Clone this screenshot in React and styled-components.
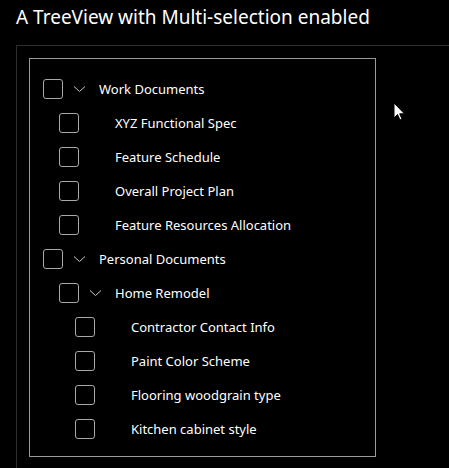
import React from 'react'
import styled, { createGlobalStyle } from 'styled-components'

const Global = createGlobalStyle`
  html, body {
    margin: 0;
    padding: 0;
    background: #000;
    overflow: hidden;
  }
  body {
    font-family: "Segoe UI", "Noto Sans", "Open Sans", sans-serif;
    color: #fff;
  }
`

const Page = styled.div`
  position: relative;
  width: 449px;
  height: 468px;
  background: #000;
  overflow: hidden;
`

const Title = styled.h1`
  margin: 0;
  padding: 3px 0 0 16px;
  height: 45px;
  box-sizing: border-box;
  font-size: 19px;
  font-weight: 400;
  line-height: 28px;
  color: #fff;
  white-space: nowrap;
`

const Panel = styled.div`
  margin-left: 16px;
  border-top: 1px solid #2e2e2e;
  border-left: 1px solid #2e2e2e;
  padding: 12px 0 0 12px;
  height: 500px;
`

const TreeBox = styled.div`
  width: 347px;
  box-sizing: border-box;
  border: 1px solid #9a9a9a;
  padding: 13px 0 10px;
`

const Row = styled.div`
  display: flex;
  align-items: center;
  height: 34px;
  padding-left: ${p => 13 + p.level * 16}px;
`

const Check = styled.span`
  flex: none;
  width: 18px;
  height: 18px;
  border: 1px solid #a8a8a8;
  border-radius: 3px;
`

const Expander = styled.span`
  flex: none;
  width: 36px;
  display: flex;
  align-items: center;
  padding-left: 10px;
  box-sizing: border-box;
`

const Label = styled.span`
  font-size: 13px;
  line-height: 20px;
  color: #fff;
  white-space: nowrap;
`

const Cursor = styled.svg`
  position: absolute;
  left: 393px;
  top: 102px;
`

const Chevron = () => (
  <svg width="13" height="8" viewBox="0 0 13 8">
    <path d="M1 1.5 L6.5 6.5 L12 1.5" fill="none" stroke="#c8c8c8" strokeWidth="1" />
  </svg>
)

const items = [
  { level: 0, text: 'Work Documents', expanded: true },
  { level: 1, text: 'XYZ Functional Spec' },
  { level: 1, text: 'Feature Schedule' },
  { level: 1, text: 'Overall Project Plan' },
  { level: 1, text: 'Feature Resources Allocation' },
  { level: 0, text: 'Personal Documents', expanded: true },
  { level: 1, text: 'Home Remodel', expanded: true },
  { level: 2, text: 'Contractor Contact Info' },
  { level: 2, text: 'Paint Color Scheme' },
  { level: 2, text: 'Flooring woodgrain type' },
  { level: 2, text: 'Kitchen cabinet style' },
]

export default function App() {
  return (
    <Page>
      <Global />
      <Title>A TreeView with Multi-selection enabled</Title>
      <Panel>
        <TreeBox>
          {items.map(item => (
            <Row key={item.text} level={item.level}>
              <Check />
              <Expander>{item.expanded && <Chevron />}</Expander>
              <Label>{item.text}</Label>
            </Row>
          ))}
        </TreeBox>
      </Panel>
      <Cursor width="13" height="20" viewBox="0 0 13 20">
        <path d="M1 1 L1 16 L4.5 12.5 L7 18 L9 17 L6.7 11.8 L11.5 11.8 Z" fill="#fff" stroke="#000" strokeWidth="1" />
      </Cursor>
    </Page>
  )
}
